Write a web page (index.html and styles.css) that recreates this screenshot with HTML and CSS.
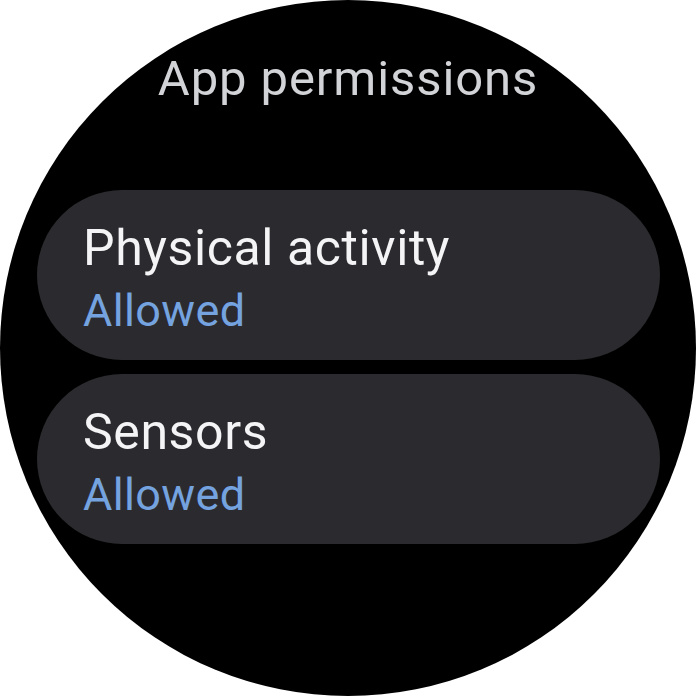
FILE: index.html
```html
<!DOCTYPE html>
<html>
<head>
<meta charset="utf-8">
<link rel="stylesheet" href="styles.css">
</head>
<body>
<div class="watch">
  <h1 class="title">App permissions</h1>
  <div class="list">
    <div class="chip">
      <div class="label">Physical activity</div>
      <div class="status">Allowed</div>
    </div>
    <div class="chip">
      <div class="label">Sensors</div>
      <div class="status">Allowed</div>
    </div>
  </div>
</div>
</body>
</html>
```
FILE: styles.css
```css
html, body {
  margin: 0;
  padding: 0;
  background: #ffffff;
}
.watch {
  width: 696px;
  height: 696px;
  border-radius: 50%;
  background: #000000;
  display: flex;
  flex-direction: column;
  align-items: center;
  font-family: Roboto, "Noto Sans", sans-serif;
  box-sizing: border-box;
  padding-top: 49px;
}
.title {
  margin: 0;
  font-weight: 400;
  font-size: 49px;
  line-height: 60px;
  color: #d2d3d7;
  letter-spacing: 0.9px;
}
.list {
  margin-top: 81px;
  display: flex;
  flex-direction: column;
  gap: 14px;
  width: 623px;
  margin-left: 1px;
}
.chip {
  height: 170px;
  border-radius: 85px;
  background: #2b2b2f;
  box-sizing: border-box;
  padding: 30px 46px 0 46px;
  display: flex;
  flex-direction: column;
}
.label {
  font-size: 50px;
  line-height: 56px;
  color: #f4f4f6;
  letter-spacing: 0.6px;
}
.status {
  font-size: 45px;
  line-height: 70px;
  color: #74a3e0;
  letter-spacing: 0.35px;
}
```
